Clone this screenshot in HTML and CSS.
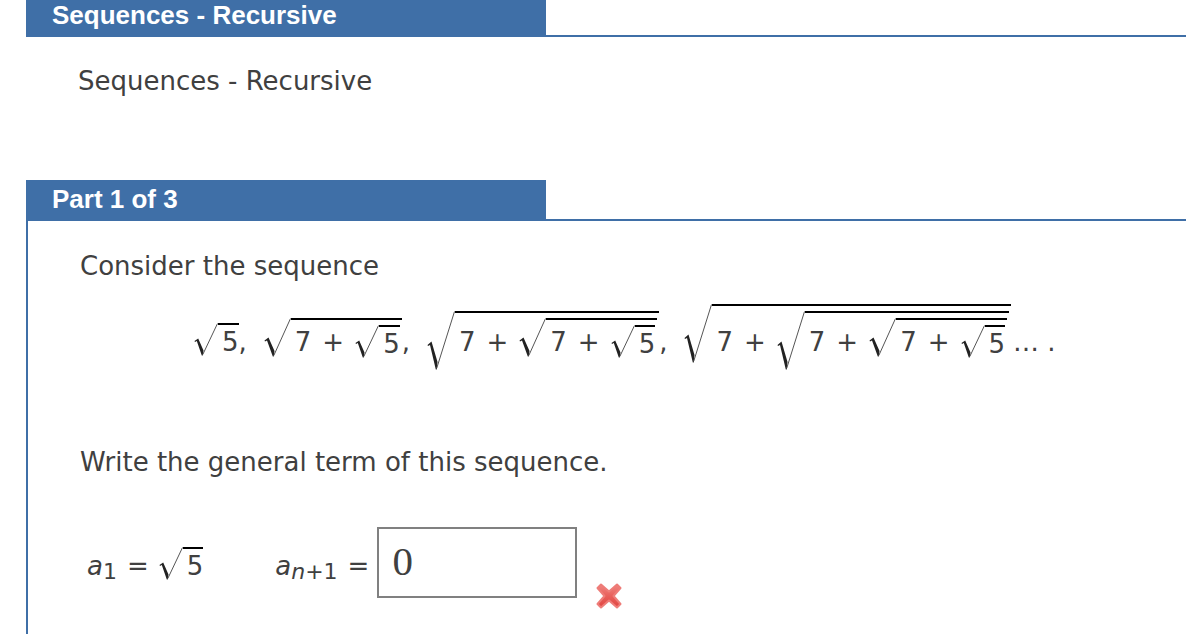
FILE: index.html
```html
<!DOCTYPE html>
<html lang="en">
<head>
  <meta charset="UTF-8">
  <title>Sequences - Recursive</title>
  <link rel="stylesheet" href="styles.css">
</head>
<body>

  <!-- radical signs, shared by all the roots below -->
  <svg class="defs" width="0" height="0" aria-hidden="true">
    <symbol id="rad-s" viewBox="0 0 24 33">
      <path class="hook" d="M0.500 18 L4.200 15.500 L9.500 27.500 L8.800 32.500 L7.800 32.500 L2.800 18 L1 19 Z"/>
      <path d="M8.800 31.500 L23.500 0.500"/>
    </symbol>
    <symbol id="rad-m" viewBox="0 0 27 40">
      <path class="hook" d="M0.500 22.500 L4.500 19.500 L10.500 33 L9.800 38.500 L8.800 38.500 L3 22.500 L1 23.500 Z"/>
      <path d="M9.800 37.500 L26.500 0.500"/>
    </symbol>
    <symbol id="rad-l" viewBox="0 0 28 59">
      <path class="hook" d="M0.500 34 L4.500 30.500 L10.500 51 L9.800 58.500 L8.800 58.500 L3 34 L1 35 Z"/>
      <path d="M9.800 57 L27.500 0.500"/>
    </symbol>
  </svg>

  <section class="part intro">
    <h2 class="part-title">Sequences - Recursive</h2>
    <div class="part-body">
      <p>Sequences - Recursive</p>
    </div>
  </section>

  <section class="part step">
    <h2 class="part-title">Part 1 of 3</h2>
    <div class="part-body">
      <p>Consider the sequence</p>

      <div class="sequence">
        <span class="term">
          <span class="root"><svg class="rad small"><use href="#rad-s"/></svg><span class="under leaf">5</span></span>,
        </span>

        <span class="term">
          <span class="root"><svg class="rad mid"><use href="#rad-m"/></svg><span class="under">
            <span class="num">7</span><span class="num">+</span>
            <span class="root"><svg class="rad small"><use href="#rad-s"/></svg><span class="under leaf">5</span></span>
          </span></span>,
        </span>

        <span class="term">
          <span class="root"><svg class="rad large"><use href="#rad-l"/></svg><span class="under">
            <span class="num">7</span><span class="num">+</span>
            <span class="root"><svg class="rad mid"><use href="#rad-m"/></svg><span class="under">
              <span class="num">7</span><span class="num">+</span>
              <span class="root"><svg class="rad small"><use href="#rad-s"/></svg><span class="under leaf">5</span></span>
            </span></span>
          </span></span>,
        </span>

        <span class="term">
          <span class="root"><svg class="rad large"><use href="#rad-l"/></svg><span class="under">
            <span class="num">7</span><span class="num">+</span>
            <span class="root"><svg class="rad large"><use href="#rad-l"/></svg><span class="under">
              <span class="num">7</span><span class="num">+</span>
              <span class="root"><svg class="rad mid"><use href="#rad-m"/></svg><span class="under">
                <span class="num">7</span><span class="num">+</span>
                <span class="root"><svg class="rad small"><use href="#rad-s"/></svg><span class="under leaf">5</span></span>
              </span></span>
            </span></span>
          </span></span>
          <span class="dots">… .</span>
        </span>
      </div>

      <p>Write the general term of this sequence.</p>

      <div class="answer">
        <span class="given">
          <span><i>a</i><span class="sub">1</span></span>
          <span>=</span>
          <span class="root"><svg class="rad small"><use href="#rad-s"/></svg><span class="under leaf">5</span></span>
        </span>
        <label class="given" for="general">
          <span><i>a</i><span class="sub"><i>n</i>+1</span></span>
          <span>=</span>
        </label>
        <input type="text" id="general" value="0">
        <svg class="wrong" viewBox="0 0 28 28" role="img" aria-label="Incorrect">
          <defs>
            <linearGradient id="red" x1="0" y1="0" x2="0" y2="1">
              <stop offset="0" stop-color="#f08580"/>
              <stop offset="0.5" stop-color="#e8605c"/>
              <stop offset="1" stop-color="#e04440"/>
            </linearGradient>
          </defs>
          <path fill="url(#red)" stroke="#ee7c78" stroke-width="2" stroke-linejoin="round" d="M6 2.500 L14 9.500 L22 2.500 L25.500 6 L18.500 14 L25.500 22 L22 25.500 L14 18.500 L6 25.500 L2.500 22 L9.500 14 L2.500 6 Z"/>
        </svg>
      </div>
    </div>
  </section>

</body>
</html>
```

FILE: styles.css
```css
body {
  margin: 0;
  padding-left: 26px;
  background: #fff;
  color: #404040;
  font-family: Verdana, "DejaVu Sans", sans-serif;
  font-size: 26px;
  line-height: 30px;
  overflow: hidden;
}

p {
  margin: 0;
}

.defs {
  position: absolute;
}

.part {
  display: flex;
  flex-direction: column;
}

/* Title bars */
.part-title {
  box-sizing: border-box;
  width: 520px;
  max-width: 100%;
  margin: 0;
  padding: 4px 26px 5px;
  background: #3f6fa7;
  color: #fff;
  font-family: Arial, "Liberation Sans", sans-serif;
  font-size: 26px;
  line-height: 30px;
}

.part-body {
  border-top: 2px solid #3f6fa7;
}

.intro .part-title {
  padding-top: 0;
}

.intro .part-body {
  padding: 29px 52px 84px;
}

.step .part-body {
  border-left: 2px solid #3f6fa7;
  padding: 30px 52px 60px;
}

/* Roots */
.sequence {
  display: flex;
  align-items: baseline;
  gap: 17px;
  padding: 23px 0 88px 114px;
  white-space: nowrap;
}

.term,
.root {
  display: flex;
  align-items: baseline;
}

.under {
  display: flex;
  align-items: flex-end;
  gap: 11px;
  padding: 5px 2px 0 4px;
  border-top: 2px solid #000;
}

.under.leaf {
  padding: 2px 0 0 4px;
}

.num {
  margin-bottom: 2px;
}

/* the sign may hang below its row without making it taller */
.rad {
  flex: none;
  align-self: flex-start;
  margin-bottom: -30px;
  fill: none;
  stroke: #555;
}

.hook {
  fill: #222;
  stroke: none;
}

.small {
  width: 24px;
  height: 33px;
}

.mid {
  width: 27px;
  height: 40px;
}

.large {
  width: 28px;
  height: 59px;
}

.dots {
  margin-left: 2px;
}

/* Answer row */
.answer {
  display: flex;
  align-items: baseline;
  padding: 50px 0 0 7px;
}

.given {
  display: flex;
  align-items: baseline;
  gap: 10px;
  margin-right: 72px;
}

label.given {
  margin-right: 8px;
}

.sub {
  font-size: 22px;
  line-height: 1;
  vertical-align: -4px;
}

input {
  box-sizing: border-box;
  width: 200px;
  height: 71px;
  padding: 0 13px 4px;
  border: 2px solid #808080;
  background: #fff;
  color: #404040;
  font-family: "Times New Roman", "Liberation Serif", serif;
  font-size: 41px;
}

.wrong {
  align-self: flex-end;
  width: 28px;
  height: 28px;
  margin: 0 0 -12px 18px;
}
```
